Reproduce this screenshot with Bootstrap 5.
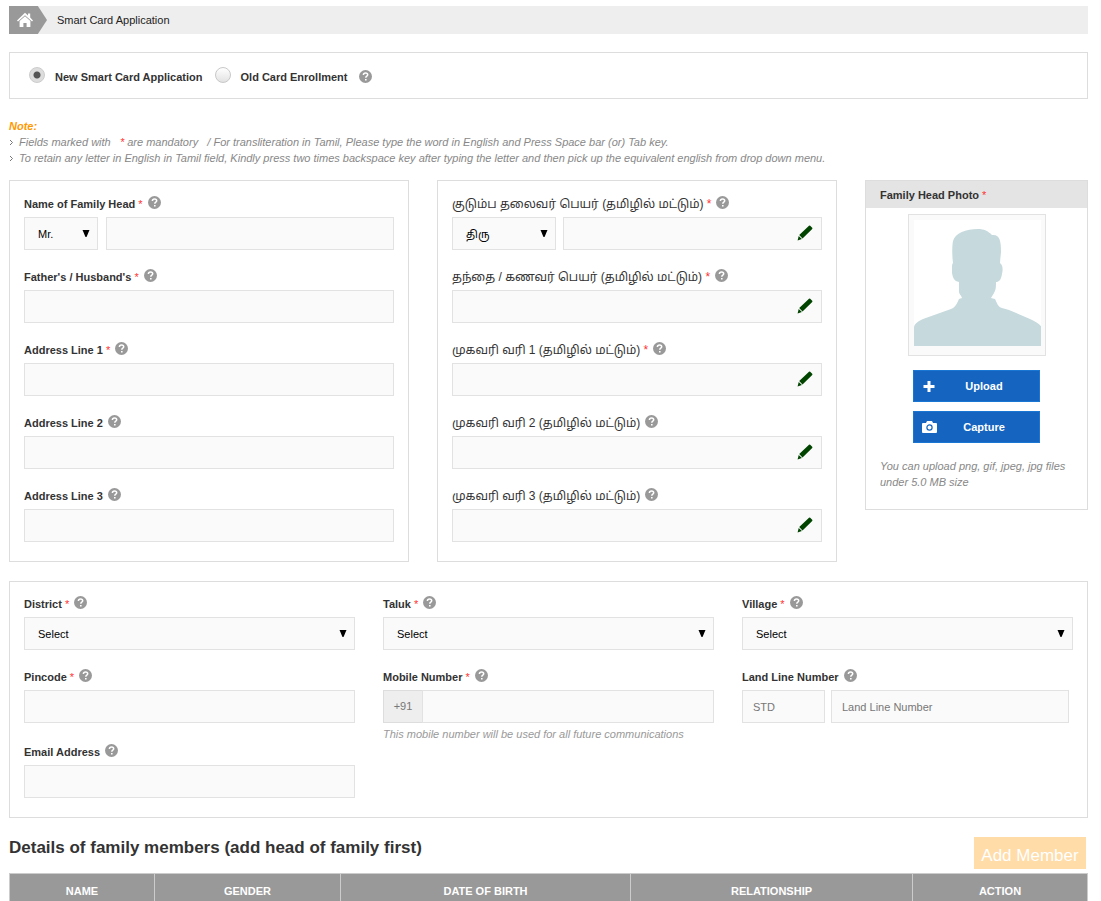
<!DOCTYPE html>
<html lang="en">
<head>
<meta charset="utf-8">
<meta name="viewport" content="width=device-width, initial-scale=1">
<title>Smart Card Application</title>
<link href="https://cdn.jsdelivr.net/npm/bootstrap@5.3.0/dist/css/bootstrap.min.css" rel="stylesheet">
<style>
body{font-family:"Liberation Sans","Noto Sans Tamil","Noto Sans",sans-serif;font-size:11px;line-height:16px;color:#333;background:#fff}
.page{padding:6px 13px 0 9px}
.crumbs{background:#eee;height:28px}
.crumb-home{width:38px;height:28px;background:#999;clip-path:polygon(0 0,76% 0,100% 50%,76% 100%,0 100%)}
.crumb-text{margin-left:10px;color:#222}
.panel{border:1px solid #ddd;background:#fff}
.form-panel{padding:14px 14px 1px}
.area-panel{margin-top:19px;padding-top:13px}
.type-panel{height:47px;margin-top:18px;padding:2px 19px 0}
.type-panel .form-check-input{width:16px;height:16px;margin:0 10px 4px 0;border:1px solid #c8c8c8;background:linear-gradient(#fff,#e2e2e2);box-shadow:none;flex:none}
.type-panel .form-check-input:checked{background:radial-gradient(circle,#555 0 3px,#ddd 4px);border-color:#ccc}
.type-panel label{font-weight:700;margin-right:12px}
.note{margin-top:19px;font-style:italic;color:#888}
.note strong{color:#f90}
.note li{padding-left:10px;background:url("data:image/svg+xml,%3Csvg xmlns='http://www.w3.org/2000/svg' width='5' height='7'%3E%3Cpath d='M1 1l2.500 2.500L1 6' fill='none' stroke='%23777'/%3E%3C/svg%3E") 0 5px no-repeat}
.req{color:#f33;font-weight:400}
.top-grid{display:grid;grid-template-columns:400fr 400fr 223fr;gap:28px;margin-top:14px;align-items:start}
.area-grid{display:grid;grid-template-columns:repeat(3,minmax(0,1fr));column-gap:28px}
.field{margin-bottom:18px}
.field-head{display:flex;align-items:flex-start;height:22px;padding-top:1px;font-weight:700;white-space:nowrap}
.field-head label{margin-right:5px}
.tamil .field-head{font-weight:400;font-size:12px}
.tamil .gap-2{gap:7px!important}
.help{width:13px;height:13px;flex:none;color:#999}
.form-control,.form-select{height:33px;border:1px solid #e2e2e2;border-radius:0;background-color:#fafafa;font-size:11px;line-height:16px;color:#000;padding:0 10px}
.form-control::placeholder{color:#777}
.form-select{padding:0 24px 0 13px;background-image:url("data:image/svg+xml,%3Csvg xmlns='http://www.w3.org/2000/svg' width='8' height='8'%3E%3Cpath d='M.5 0h7L4.500 7h-1z'/%3E%3C/svg%3E");background-size:8px 8px;background-position:right 7px center}
.title-en{width:74px;flex:none}
.title-ta{width:104px;flex:none}
.pencil{position:absolute;right:9px;top:8px;width:16px;height:16px;color:#040}
.pencil svg{display:block}
.hint{font-style:italic;color:#999;height:20px;padding-top:3px}
.dial{height:33px;width:40px;padding:0;justify-content:center;border:1px solid #ddd;border-right-color:#ccc;border-radius:0;background:#eee;color:#777;font-size:11px}
.std{width:83px;flex:none}
.phone{padding-right:4px;gap:6px}
.photo-head{background:#e4e4e4;height:27px;padding:6px 14px;font-weight:700}
.frame{width:138px;height:142px;padding:5px;border:1px solid #e2e2e2;background:#fafafa}
.frame svg{display:block}
.photo-body{padding:6px 0 0}
.photo-actions{display:grid;gap:9px;margin-top:14px}
.photo-btn{width:127px;height:32px;padding:0 8px;border:1px solid #1976d2;border-radius:0;background:#1565c0;color:#fff;font-size:11px;line-height:16px;font-weight:700;display:flex;align-items:center}
.photo-btn svg{width:15px;height:13px;flex:none}
.photo-btn span{flex:1;text-align:center}
.photo-text{font-style:italic;color:#888;padding:15px 14px 19px}
.members{margin-top:19px;height:36px}
.members h2{font-size:17px;line-height:22px;font-weight:700;margin:0}
.add-btn{height:32px;width:112px;padding:6px 0 0;border:0;border-radius:0;background:#ffdca8;color:#fff;font-size:17px;line-height:26px;margin-right:2px}
.member-table{table-layout:fixed;margin:0;border:1px solid #ccc}
.member-table th{background:#999;color:#fff;border:1px solid #ccc;height:28px;padding:9px 0 2px;text-align:center;line-height:16px}
.w-name{width:145px}.w-gender{width:186px}.w-dob{width:290px}.w-rel{width:282px}.w-act{width:175px}
</style>
</head>
<body>
<svg class="d-none" aria-hidden="true">
<symbol id="help" viewBox="0 0 13 13"><circle cx="6.500" cy="6.500" r="6.500" fill="currentColor"/><path d="M4.400 5c0-1.400 1-2.100 2.200-2.100s2.100.7 2.100 1.800c0 1.500-1.900 1.500-1.900 3" fill="none" stroke="#fff" stroke-width="1.500"/><path d="M6 8.900h1.600v1.500H6z" fill="#fff"/></symbol>
<symbol id="pencil" viewBox="0 0 16 16"><path d="M9.900 2.800L12 .8q.6-.5 1.200 0l2 2q.5.600 0 1.200l-2 2.100L5.500 13.400l-3.300-3.300zM1.700 10.900L4.900 14l-4.300 1.400z" fill="currentColor"/></symbol>
</svg>
<main class="page">
<nav class="crumbs d-flex align-items-center" aria-label="breadcrumb">
<a href="#" class="crumb-home d-flex align-items-center" aria-label="Home"><svg class="ms-2" width="16" height="16" viewBox="0 0 16 16" fill="#fff"><path d="M8 .8l3 2.700V1.600h2.200v3.900L16 8.400l-1 1.100L8 3.200 1 9.500 0 8.400z"/><path d="M8 4.200l5.400 4.900V15H9.600v-4H6.400v4H2.600V9.100z"/></svg></a>
<span class="crumb-text">Smart Card Application</span>
</nav>

<section class="panel type-panel d-flex align-items-center">
<input class="form-check-input" type="radio" name="kind" id="kindNew" checked><label for="kindNew">New Smart Card Application</label>
<input class="form-check-input" type="radio" name="kind" id="kindOld"><label for="kindOld">Old Card Enrollment</label>
<svg class="help"><use href="#help"/></svg>
</section>

<section class="note">
<strong>Note:</strong>
<ul class="list-unstyled m-0">
<li>Fields marked with &nbsp;&nbsp;<span class="req">*</span> are mandatory &nbsp;&nbsp;/ For transliteration in Tamil, Please type the word in English and Press Space bar (or) Tab key.</li>
<li>To retain any letter in English in Tamil field, Kindly press two times backspace key after typing the letter and then pick up the equivalent english from drop down menu.</li>
</ul>
</section>

<form>
<div class="top-grid">
<section class="panel form-panel">
<div class="field"><div class="field-head"><label for="name">Name of Family Head <span class="req">*</span></label><svg class="help"><use href="#help"/></svg></div>
<div class="d-flex gap-2"><select class="form-select title-en" aria-label="Title"><option>Mr.</option></select><input class="form-control" id="name"></div></div>
<div class="field"><div class="field-head"><label for="father">Father's / Husband's <span class="req">*</span></label><svg class="help"><use href="#help"/></svg></div><input class="form-control" id="father"></div>
<div class="field"><div class="field-head"><label for="a1">Address Line 1 <span class="req">*</span></label><svg class="help"><use href="#help"/></svg></div><input class="form-control" id="a1"></div>
<div class="field"><div class="field-head"><label for="a2">Address Line 2</label><svg class="help"><use href="#help"/></svg></div><input class="form-control" id="a2"></div>
<div class="field"><div class="field-head"><label for="a3">Address Line 3</label><svg class="help"><use href="#help"/></svg></div><input class="form-control" id="a3"></div>
</section>

<section class="panel form-panel tamil" lang="ta">
<div class="field"><div class="field-head"><label for="tname">குடும்ப தலைவர் பெயர் (தமிழில் மட்டும்) <span class="req">*</span></label><svg class="help"><use href="#help"/></svg></div>
<div class="d-flex gap-2"><select class="form-select title-ta" aria-label="Title"><option>திரு</option></select><div class="position-relative flex-fill"><input class="form-control" id="tname"><span class="pencil"><svg width="16" height="16"><use href="#pencil"/></svg></span></div></div></div>
<div class="field"><div class="field-head"><label for="tfather">தந்தை / கணவர் பெயர் (தமிழில் மட்டும்) <span class="req">*</span></label><svg class="help"><use href="#help"/></svg></div><div class="position-relative"><input class="form-control" id="tfather"><span class="pencil"><svg width="16" height="16"><use href="#pencil"/></svg></span></div></div>
<div class="field"><div class="field-head"><label for="t1">முகவரி வரி 1 (தமிழில் மட்டும்) <span class="req">*</span></label><svg class="help"><use href="#help"/></svg></div><div class="position-relative"><input class="form-control" id="t1"><span class="pencil"><svg width="16" height="16"><use href="#pencil"/></svg></span></div></div>
<div class="field"><div class="field-head"><label for="t2">முகவரி வரி 2 (தமிழில் மட்டும்)</label><svg class="help"><use href="#help"/></svg></div><div class="position-relative"><input class="form-control" id="t2"><span class="pencil"><svg width="16" height="16"><use href="#pencil"/></svg></span></div></div>
<div class="field"><div class="field-head"><label for="t3">முகவரி வரி 3 (தமிழில் மட்டும்)</label><svg class="help"><use href="#help"/></svg></div><div class="position-relative"><input class="form-control" id="t3"><span class="pencil"><svg width="16" height="16"><use href="#pencil"/></svg></span></div></div>
</section>

<section class="panel">
<div class="photo-head">Family Head Photo <span class="req">*</span></div>
<div class="photo-body d-flex flex-column align-items-center">
<div class="frame"><svg width="127" height="126" viewBox="0 0 127 126"><path fill="#fff" d="M0 0h127v126H0z"/><path fill="#c6d9dd" d="M0 126v-19c1-4 5-6 9-8l28-10c5-2 6-6 8-10l3-1c-1-3-3-4-3-6V62c-5-1-6-4-7-9v-7c0-2 1-3 1-3-1-8-1-17 0-22C41 13 52 9 64 9c6 0 10 2 14 6 8-1 9 7 9 16 0 4-1 8-1 12 3 2 3 7 2 11-1 6-3 8-6 8 0 4 0 8-2 11l-3 5 4 1c2 4 3 8 7 9 2 1 5 1 7 2l21 9c6 3 10 5 12 9v18z"/></svg></div>
<div class="photo-actions"><button type="button" class="photo-btn"><svg viewBox="0 0 15 13"><path d="M7 1v11M1.500 6.500h11" stroke="#fff" stroke-width="3"/></svg><span>Upload</span></button>
<button type="button" class="photo-btn"><svg viewBox="0 0 15 13"><path d="M4 2l1-2h5l1 2h3q1 0 1 1v8q0 1-1 1H1q-1 0-1-1V3q0-1 1-1z" fill="#fff"/><circle cx="7.500" cy="6.500" r="2.600" fill="none" stroke="#1565c0" stroke-width="1.200"/></svg><span>Capture</span></button></div>
</div>
<div class="photo-text">You can upload png, gif, jpeg, jpg files under 5.0 MB size</div>
</section>
</div>

<section class="panel form-panel area-panel area-grid">
<div class="field"><div class="field-head"><label for="district">District <span class="req">*</span></label><svg class="help"><use href="#help"/></svg></div><select class="form-select" id="district"><option>Select</option></select></div>
<div class="field"><div class="field-head"><label for="taluk">Taluk <span class="req">*</span></label><svg class="help"><use href="#help"/></svg></div><select class="form-select" id="taluk"><option>Select</option></select></div>
<div class="field"><div class="field-head"><label for="village">Village <span class="req">*</span></label><svg class="help"><use href="#help"/></svg></div><select class="form-select" id="village"><option>Select</option></select></div>
<div class="field"><div class="field-head"><label for="pin">Pincode <span class="req">*</span></label><svg class="help"><use href="#help"/></svg></div><input class="form-control" id="pin"></div>
<div><div class="field-head"><label for="mobile">Mobile Number <span class="req">*</span></label><svg class="help"><use href="#help"/></svg></div><div class="input-group"><span class="input-group-text dial">+91</span><input class="form-control" id="mobile" type="tel"></div><div class="hint">This mobile number will be used for all future communications</div></div>
<div class="field"><div class="field-head"><label for="land">Land Line Number</label><svg class="help"><use href="#help"/></svg></div><div class="d-flex phone"><input class="form-control std" placeholder="STD" aria-label="STD"><input class="form-control" id="land" placeholder="Land Line Number"></div></div>
<div class="field"><div class="field-head"><label for="email">Email Address</label><svg class="help"><use href="#help"/></svg></div><input class="form-control" id="email" type="email"></div>
</section>
</form>

<div class="members d-flex justify-content-between">
<h2>Details of family members (add head of family first)</h2>
<button type="button" class="btn add-btn">Add Member</button>
</div>
<table class="table member-table">
<colgroup><col class="w-name"><col class="w-gender"><col class="w-dob"><col class="w-rel"><col class="w-act"></colgroup>
<thead><tr><th>NAME</th><th>GENDER</th><th>DATE OF BIRTH</th><th>RELATIONSHIP</th><th>ACTION</th></tr></thead>
</table>
</main>
<script src="https://cdn.jsdelivr.net/npm/bootstrap@5.3.0/dist/js/bootstrap.bundle.min.js"></script>
</body>
</html>
